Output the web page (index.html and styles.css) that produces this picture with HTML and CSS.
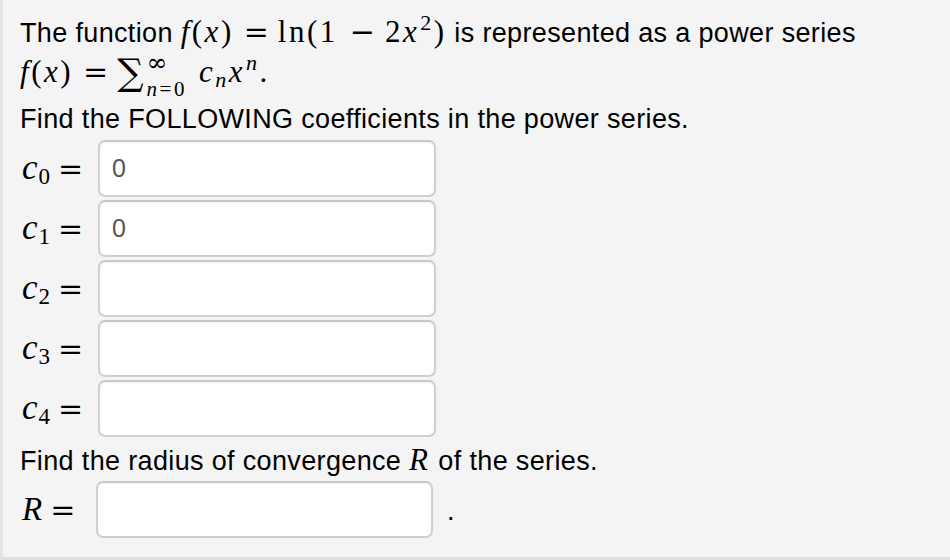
FILE: index.html
```html
<!DOCTYPE html>
<html>
<head>
<meta charset="utf-8">
<link rel="stylesheet" href="styles.css">
</head>
<body>
<div class="card">
  <p class="intro">The function <span class="m"><i>f</i>(<i>x</i>)<span class="eq">=</span>ln(1<span class="op">−</span>2<i>x</i><sup>2</sup>)</span> is represented as a power series<br><span class="m"><i>f</i>(<i>x</i>)<span class="eq">=</span><span class="sum">∑</span><span class="limits"><span class="up">∞</span><span class="down"><i>n</i>=0</span></span><i>c</i><sub><i>n</i></sub><i>x</i><sup><i>n</i></sup>.</span></p>
  <p class="q">Find the FOLLOWING coefficients in the power series.</p>
  <div class="rows">
    <div class="row"><span class="lbl m"><i>c</i><sub>0</sub><span class="eq">=</span></span><div class="box">0</div></div>
    <div class="row"><span class="lbl m"><i>c</i><sub>1</sub><span class="eq">=</span></span><div class="box">0</div></div>
    <div class="row"><span class="lbl m"><i>c</i><sub>2</sub><span class="eq">=</span></span><div class="box"></div></div>
    <div class="row"><span class="lbl m"><i>c</i><sub>3</sub><span class="eq">=</span></span><div class="box"></div></div>
    <div class="row"><span class="lbl m"><i>c</i><sub>4</sub><span class="eq">=</span></span><div class="box"></div></div>
  </div>
  <p class="q2">Find the radius of convergence <span class="m"><i>R</i></span> of the series.</p>
  <div class="row rrow"><span class="lbl m"><i>R</i><span class="eq">=</span></span><div class="box"></div><span class="dot">.</span></div>
</div>
</body>
</html>
```
FILE: styles.css
```css
html, body {
  margin: 0;
  padding: 0;
  background: #f4f4f4;
}
.card {
  width: 950px;
  height: 560px;
  box-sizing: border-box;
  background: #f4f4f4;
  border-left: 3px solid #e4e4e4;
  border-bottom: 3px solid #e0e0e0;
  padding: 13px 0 0 17px;
  font-family: "Liberation Sans", Arial, sans-serif;
  font-size: 27px;
  letter-spacing: 0.35px;
  color: #000;
}
p { margin: 0; }
.intro { line-height: 38px; height: 76px; }
.m {
  font-family: "Liberation Serif", "Times New Roman", serif;
  font-size: 31px;
  letter-spacing: 2.5px;
  white-space: nowrap;
}
.m i { font-style: italic; }
.eq, .op {
  font-family: "DejaVu Serif", serif;
  font-size: 30px;
  letter-spacing: 0;
}
.eq { margin: 0 9px 0 10px; }
.op { margin: 0 10px 0 12px; }
sup, sub { font-size: 22px; line-height: 0; }
sup { vertical-align: 12px; margin-left: 1px; }
sub { vertical-align: -5px; }
.sum {
  font-family: "DejaVu Serif", serif;
  font-size: 37px;
  letter-spacing: 0;
  vertical-align: -3px;
  margin-right: 3px;
}
.limits {
  display: inline-block;
  vertical-align: -14px;
  font-size: 21px;
  line-height: 18px;
  margin-right: 12px;
}
.limits .up, .limits .down { display: block; }
.limits .up {
  font-family: "DejaVu Serif", serif;
  font-size: 25px;
  line-height: 22px;
  margin-bottom: 6px;
  letter-spacing: 0;
}
.q { margin-top: 15px; line-height: 30px; }
.rows {
  display: flex;
  flex-direction: column;
  gap: 3px;
  margin-top: 6px;
}
.row {
  display: flex;
  align-items: center;
}
.lbl {
  width: 78px;
  padding-left: 2px;
  box-sizing: border-box;
  line-height: 30px;
  letter-spacing: 0;
}
.lbl i { font-size: 35px; }
.lbl sub { font-size: 23px; margin-left: 1px; }
.lbl .eq { margin: 0 0 0 8px; }
.box {
  width: 338px;
  height: 57px;
  box-sizing: border-box;
  background: #fff;
  border: 2px solid #cfcfcf;
  border-top-color: #c8c8c8;
  border-radius: 7px;
  box-shadow: inset 0 1px 2px rgba(0,0,0,0.06);
  display: flex;
  align-items: center;
  padding-left: 12px;
  font-family: "Liberation Sans", Arial, sans-serif;
  font-size: 25px;
  letter-spacing: 0;
  color: #555;
}
.q2 { margin-top: 8px; line-height: 30px; }
.rrow { margin-top: 5px; }
.rrow .lbl { width: 76px; }
.rrow .lbl i { font-size: 33px; }
.rrow .box { width: 337px; }
.dot { margin-left: 14px; margin-top: 4px; }
```
